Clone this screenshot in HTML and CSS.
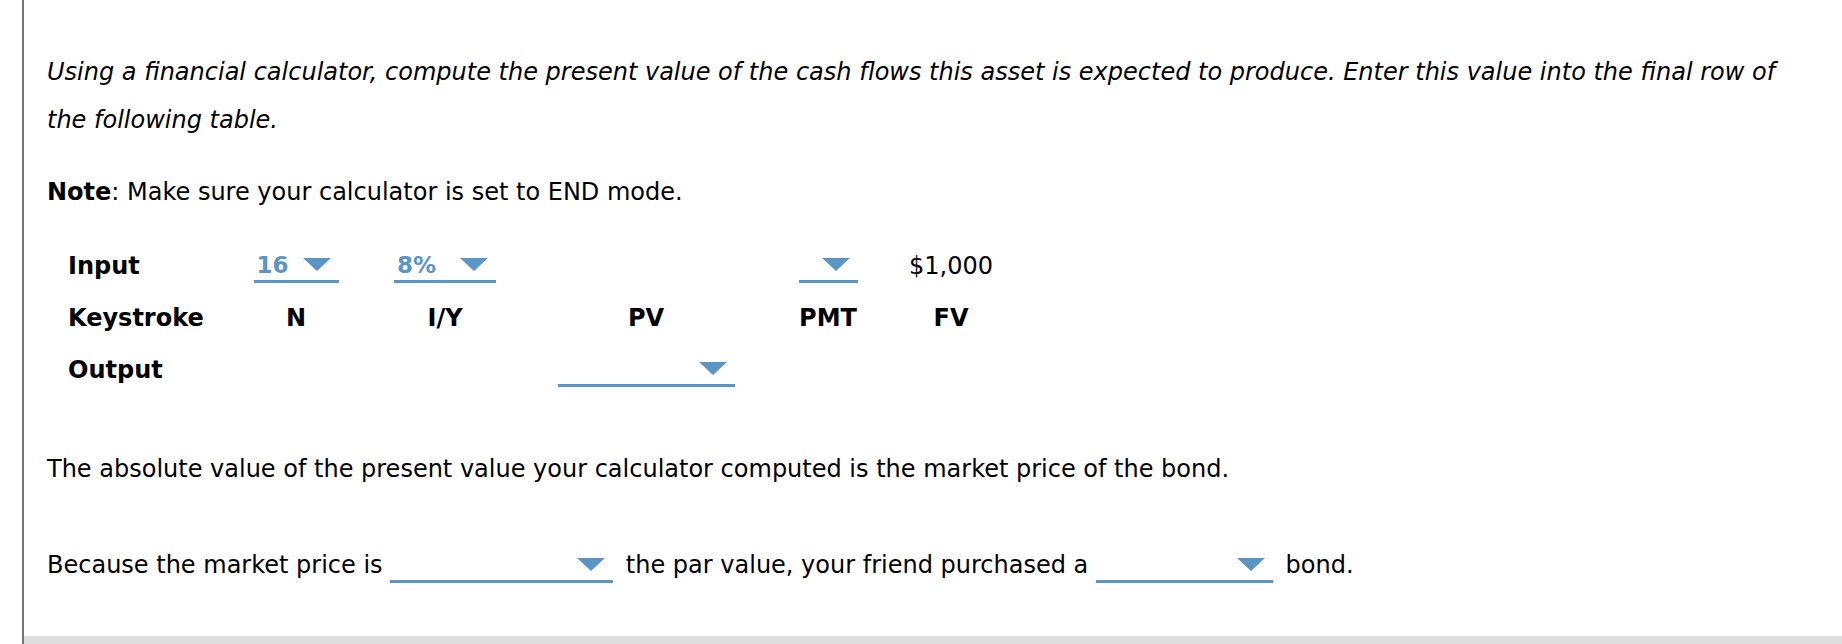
FILE: index.html
```html
<!DOCTYPE html>
<html lang="en">
<head>
<meta charset="utf-8">
<title>Present value of cash flows</title>
<link rel="stylesheet" href="styles.css">
</head>
<body>
<div class="page">
  <div class="content">
    <p class="intro"><em>Using a financial calculator, compute the present value of the cash flows this asset is expected to produce. Enter this value into the final row of the following table.</em></p>
    <p class="note"><strong>Note</strong>: Make sure your calculator is set to END mode.</p>

    <div class="calc">
      <div class="label">Input</div>
      <div class="cell"><span class="dd dd-n"><span class="val">16</span><svg class="tri" viewBox="0 0 28 13"><polygon points="0,0 28,0 14,13"/></svg></span></div>
      <div class="cell"><span class="dd dd-iy"><span class="val">8%</span><svg class="tri" viewBox="0 0 28 13"><polygon points="0,0 28,0 14,13"/></svg></span></div>
      <div class="cell"></div>
      <div class="cell"><span class="dd dd-pmt"><svg class="tri" viewBox="0 0 28 13"><polygon points="0,0 28,0 14,13"/></svg></span></div>
      <div class="cell plain">$1,000</div>

      <div class="label">Keystroke</div>
      <div class="cell key">N</div>
      <div class="cell key">I/Y</div>
      <div class="cell key">PV</div>
      <div class="cell key">PMT</div>
      <div class="cell key">FV</div>

      <div class="label">Output</div>
      <div class="cell"></div>
      <div class="cell"></div>
      <div class="cell"><span class="dd dd-out"><svg class="tri" viewBox="0 0 28 13"><polygon points="0,0 28,0 14,13"/></svg></span></div>
      <div class="cell"></div>
      <div class="cell"></div>
    </div>

    <p class="abs">The absolute value of the present value your calculator computed is the market price of the bond.</p>
    <p class="because">Because the market price is <span class="dd dd-wide"><svg class="tri" viewBox="0 0 28 13"><polygon points="0,0 28,0 14,13"/></svg></span> the par value, your friend purchased a <span class="dd dd-mid"><svg class="tri" viewBox="0 0 28 13"><polygon points="0,0 28,0 14,13"/></svg></span> bond.</p>
  </div>
  <div class="bottom-bar"></div>
</div>
</body>
</html>
```

FILE: styles.css
```css
html, body {
  margin: 0;
  padding: 0;
  background: #ffffff;
}

body {
  font-family: "DejaVu Sans", Verdana, sans-serif;
  font-size: 24px;
  color: #000000;
  width: 1842px;
  height: 644px;
  overflow: hidden;
}

.page {
  margin-left: 22px;
  border-left: 2px solid #777777;
  height: 644px;
  display: flex;
  flex-direction: column;
}

.content {
  flex: 1;
  padding: 48px 32px 0 23px;
}

p {
  margin: 0;
  line-height: 48px;
}

.intro {
  margin-bottom: 24px;
}

.note {
  margin-bottom: 24px;
}

.calc {
  display: grid;
  grid-template-columns: 172px 112px 186px 216px 148px 98px;
  grid-auto-rows: 52px;
  align-items: center;
  margin-left: 21px;
  margin-bottom: 49px;
}

.label {
  font-weight: bold;
}

.cell {
  display: flex;
  justify-content: center;
  align-items: center;
  height: 52px;
}

.key {
  font-weight: bold;
}

.dd {
  display: inline-flex;
  align-items: center;
  justify-content: flex-end;
  gap: 14px;
  height: 34px;
  padding: 0 8px 0 3px;
  border-bottom: 3px solid #5a95c6;
  vertical-align: middle;
  box-sizing: border-box;
}

.dd-n {
  width: 85px;
  justify-content: space-between;
}

.dd-iy {
  width: 102px;
  justify-content: space-between;
}

.val {
  color: #5a95c6;
  font-weight: bold;
  font-size: 23px;
}

.tri {
  width: 28px;
  height: 13px;
  fill: #5a95c6;
  display: block;
}

.dd-pmt {
  width: 59px;
}

.dd-out {
  width: 177px;
}

.abs {
  margin-bottom: 48px;
}

.dd-wide {
  width: 223px;
  margin-right: 5px;
}

.dd-mid {
  width: 177px;
  margin-right: 5px;
}

.bottom-bar {
  height: 8px;
  background: #dddddd;
}
```
